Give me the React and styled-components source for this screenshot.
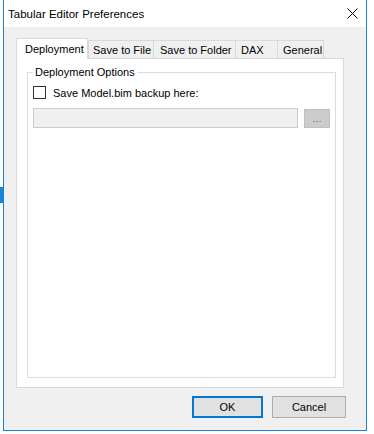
import styled, { createGlobalStyle } from "styled-components";

const GlobalStyle = createGlobalStyle`
  html, body {
    margin: 0;
    padding: 0;
    background: #ffffff;
  }
  body {
    font-family: "Liberation Sans", Arial, sans-serif;
    font-size: 11px;
    color: #000000;
    overflow: hidden;
  }
`;

const Desktop = styled.div`
  display: flex;
  width: 374px;
  height: 434px;
  overflow: hidden;
`;

const EdgeStrip = styled.div`
  width: ${(p) => p.$width}px;
  flex-shrink: 0;
  display: flex;
  flex-direction: column;
`;

const EdgeMark = styled.div`
  margin-top: ${(p) => p.$top}px;
  height: ${(p) => p.$height}px;
  background: ${(p) => p.$color};
`;

const Window = styled.div`
  width: 362px;
  height: 430px;
  flex-shrink: 0;
  border: 1px solid #1883d7;
  border-top: none;
  background: #f0f0f0;
  display: flex;
  flex-direction: column;
`;

const TitleBar = styled.div`
  height: 27px;
  flex-shrink: 0;
  background: #ffffff;
  display: flex;
  align-items: center;
  justify-content: space-between;
  padding-left: 4px;
`;

const Title = styled.span`
  font-size: 11.5px;
  line-height: 14px;
  padding-top: 1px;
`;

const CloseButton = styled.div`
  width: 28px;
  height: 27px;
  display: flex;
  align-items: center;
  justify-content: center;
`;

const Body = styled.div`
  flex: 1;
  display: flex;
  flex-direction: column;
  padding: 11px 20px 0 12px;
`;

const TabStrip = styled.div`
  display: flex;
  align-items: flex-end;
  height: 21px;
  margin-bottom: -1px;
`;

const Tab = styled.div`
  box-sizing: border-box;
  width: ${(p) => p.$width}px;
  height: ${(p) => (p.$active ? 21 : 19)}px;
  margin-left: ${(p) => (p.$joined ? -1 : 0)}px;
  border: 1px solid #d9d9d9;
  border-bottom: none;
  background: ${(p) => (p.$active ? "#ffffff" : "#f0f0f0")};
  display: flex;
  justify-content: flex-start;
  align-items: ${(p) => (p.$active ? "flex-start" : "center")};
  padding-top: ${(p) => (p.$active ? 3 : 0)}px;
  padding-left: ${(p) => p.$pad}px;
  line-height: 14px;
  white-space: nowrap;
  position: ${(p) => (p.$active ? "relative" : "static")};
  z-index: ${(p) => (p.$active ? 1 : "auto")};
`;

const Panel = styled.div`
  box-sizing: border-box;
  width: 328px;
  height: 330px;
  border: 1px solid #d9d9d9;
  background: #ffffff;
  padding: 6px 7px 9px 10px;
  display: flex;
  flex-direction: column;
`;

const GroupBox = styled.fieldset`
  flex: 1;
  min-width: 0;
  margin: 0;
  padding: 0 5px;
  border: 1px solid #dcdcdc;
  display: flex;
  flex-direction: column;
`;

const Legend = styled.legend`
  padding: 0 2px;
  line-height: 14px;
`;

const CheckRow = styled.label`
  display: flex;
  align-items: center;
  gap: 7px;
  height: 17px;
  margin-top: 5px;
  line-height: 14px;
`;

const CheckBox = styled.span`
  box-sizing: border-box;
  width: 13px;
  height: 13px;
  border: 1px solid #333333;
  background: #ffffff;
`;

const PathRow = styled.div`
  display: flex;
  align-items: flex-start;
  gap: 6px;
  margin-top: 7px;
`;

const TextBox = styled.div`
  box-sizing: border-box;
  width: 265px;
  height: 20px;
  border: 1px solid #cccccc;
  background: #f0f0f0;
`;

const BrowseButton = styled.div`
  box-sizing: border-box;
  width: 26px;
  height: 19px;
  margin-top: 1px;
  border: 1px solid #bfbfbf;
  background: #cccccc;
  color: #6e6e6e;
  display: flex;
  align-items: center;
  justify-content: center;
  line-height: 14px;
  padding-bottom: 1px;
`;

const Footer = styled.div`
  display: flex;
  justify-content: flex-end;
  gap: 9px;
  margin-top: 8px;
`;

const Button = styled.div`
  box-sizing: border-box;
  width: ${(p) => p.$width}px;
  height: 22px;
  border: ${(p) => (p.$default ? "2px solid #0078d7" : "1px solid #adadad")};
  background: #e1e1e1;
  display: flex;
  align-items: center;
  justify-content: center;
  line-height: 14px;
`;

const tabs = [
  { label: "Deployment", width: 72, pad: 8, active: true },
  { label: "Save to File", width: 66, pad: 4 },
  { label: "Save to Folder", width: 83, pad: 6, joined: true },
  { label: "DAX", width: 43, pad: 5, joined: true },
  { label: "General", width: 47, pad: 5, joined: true },
];

function CloseIcon() {
  return (
    <svg width="11" height="11" viewBox="0 0 11 11">
      <path d="M0.5 0.5 L10.5 10.5 M10.5 0.5 L0.5 10.5" stroke="#000" strokeWidth="1" />
    </svg>
  );
}

export default function App() {
  return (
    <>
      <GlobalStyle />
      <Desktop>
        <EdgeStrip $width={3}>
          <EdgeMark $top={187} $height={16} $color="#1883d7" />
        </EdgeStrip>
        <Window>
          <TitleBar>
            <Title>Tabular Editor Preferences</Title>
            <CloseButton>
              <CloseIcon />
            </CloseButton>
          </TitleBar>
          <Body>
            <TabStrip>
              {tabs.map((t) => (
                <Tab
                  key={t.label}
                  $width={t.width}
                  $pad={t.pad}
                  $active={t.active}
                  $joined={t.joined}
                >
                  {t.label}
                </Tab>
              ))}
            </TabStrip>
            <Panel>
              <GroupBox>
                <Legend>Deployment Options</Legend>
                <CheckRow>
                  <CheckBox />
                  Save Model.bim backup here:
                </CheckRow>
                <PathRow>
                  <TextBox />
                  <BrowseButton>...</BrowseButton>
                </PathRow>
              </GroupBox>
            </Panel>
            <Footer>
              <Button $width={71} $default>
                OK
              </Button>
              <Button $width={74}>Cancel</Button>
            </Footer>
          </Body>
        </Window>
        <EdgeStrip $width={8} />
      </Desktop>
    </>
  );
}
